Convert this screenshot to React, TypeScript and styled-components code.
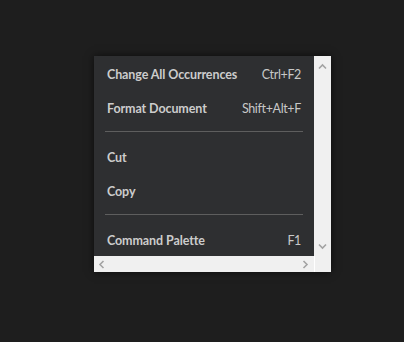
import React from 'react'
import styled, { createGlobalStyle } from 'styled-components'

const GlobalStyle = createGlobalStyle`
  html, body {
    margin: 0;
    background: #1e1e1e;
    height: 100%;
  }
  body {
    font-family: Lato, 'Noto Sans', sans-serif;
  }
`

const Page = styled.div`
  padding: 56px 0 0 94px;
`

const Frame = styled.div`
  display: grid;
  grid-template-columns: 220px 17px;
  grid-template-rows: 200px 16px;
  width: 237px;
  box-shadow: 0 0 8px rgba(0, 0, 0, 0.6);
`

const Viewport = styled.div`
  background: #2e2f31;
  overflow: hidden;
`

const MenuList = styled.div`
  padding-top: 1px;
`

const Item = styled.div`
  height: 34px;
  display: flex;
  align-items: center;
  justify-content: space-between;
  padding: 0 13px;
`

const Label = styled.span`
  color: #cccccc;
  font-weight: 700;
  font-size: 12.5px;
  letter-spacing: -0.1px;
`

const Shortcut = styled.span`
  color: #c8c8c8;
  font-weight: 400;
  font-size: 12.5px;
  letter-spacing: -0.35px;
`

const Separator = styled.div`
  height: 1px;
  margin: 6px 11px 8px;
  background: #5e5e5e;
`

const Track = styled.div<{ $vertical?: boolean }>`
  background: #f0f0f0;
  display: flex;
  flex-direction: ${({ $vertical }) => ($vertical ? 'column' : 'row')};
  justify-content: space-between;
  align-items: center;
  padding: ${({ $vertical }) => ($vertical ? '6px 0 5px' : '0 4px 0 3px')};
`

const Corner = styled.div`
  background: #f0f0f0;
  border-left: 1px solid #ffffff;
`

const Arrow = ({ dir }: { dir: 'up' | 'down' | 'left' | 'right' }) => {
  const rot = { up: 0, right: 90, down: 180, left: 270 }[dir]
  return (
    <svg width="9" height="9" viewBox="0 0 9 9" style={{ transform: `rotate(${rot}deg)` }}>
      <path d="M1 6.5 L4.5 3 L8 6.5" fill="none" stroke="#a3a3a3" strokeWidth="1.6" />
    </svg>
  )
}

const items: ({ label: string; key?: string } | 'sep')[] = [
  { label: 'Change All Occurrences', key: 'Ctrl+F2' },
  { label: 'Format Document', key: 'Shift+Alt+F' },
  'sep',
  { label: 'Cut' },
  { label: 'Copy' },
  'sep',
  { label: 'Command Palette', key: 'F1' },
]

export default function App() {
  return (
    <>
      <GlobalStyle />
      <Page>
        <Frame>
          <Viewport>
            <MenuList>
              {items.map((it, i) =>
                it === 'sep' ? (
                  <Separator key={i} />
                ) : (
                  <Item key={i}>
                    <Label>{it.label}</Label>
                    {it.key && <Shortcut>{it.key}</Shortcut>}
                  </Item>
                )
              )}
            </MenuList>
          </Viewport>
          <Track $vertical>
            <Arrow dir="up" />
            <Arrow dir="down" />
          </Track>
          <Track>
            <Arrow dir="left" />
            <Arrow dir="right" />
          </Track>
          <Corner />
        </Frame>
      </Page>
    </>
  )
}
